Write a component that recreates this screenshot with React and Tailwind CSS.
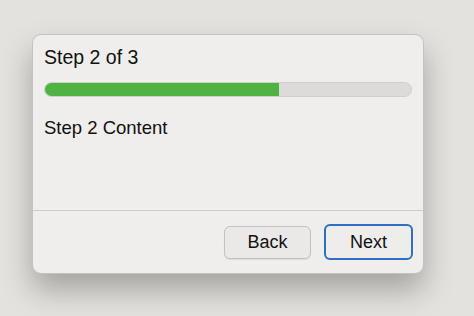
export default function App() {
  return (
    <div className="w-[474px] h-[316px] bg-[#e4e2de] pt-[34px] pl-[32px] overflow-hidden" style={{ fontFamily: '"Liberation Sans", Arial, sans-serif' }}>
      <div className="w-[392px] h-[240px] bg-[#efeeec] rounded-[9px] border border-[#c4c2be] shadow-[0_16px_30px_rgba(0,0,0,0.28)] flex flex-col">
        <div className="flex-1 border-b border-[#cfcdc9] px-[11px] pt-[13px]">
          <h1 className="text-[19.5px] leading-[19.5px] text-[#111]">Step 2 of 3</h1>
          <div className="mt-[14px] h-[15px] rounded-full bg-[#dcdbd9] border border-[#cfcecb] overflow-hidden">
            <div className="h-full w-[64%] bg-[#4fb343]"></div>
          </div>
          <p className="mt-[22px] text-[18.5px] leading-[18.5px] text-[#111]">Step 2 Content</p>
        </div>
        <div className="h-[62px] flex items-center justify-end gap-[13px] pr-[10px]">
          <button className="w-[87px] h-[33px] rounded-[6px] border border-[#c3c2bf] bg-[#eae9e7] text-[18px] text-[#111] shadow-[0_1px_1px_rgba(0,0,0,0.08)]">Back</button>
          <button className="w-[89px] h-[36px] rounded-[6px] border-2 border-[#2e6fbf] bg-[#eeedeb] text-[18px] text-[#111]">Next</button>
        </div>
      </div>
    </div>
  );
}
